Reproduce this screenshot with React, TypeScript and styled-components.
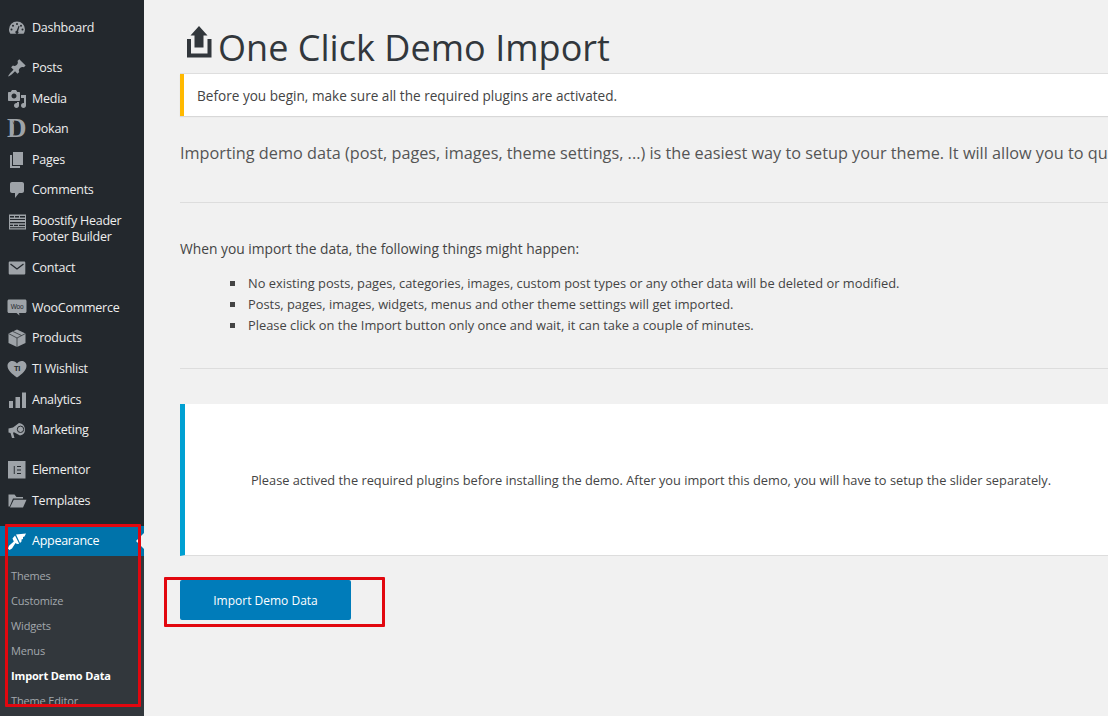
import React from "react";
import styled, { createGlobalStyle } from "styled-components";

const Global = createGlobalStyle`
  html, body { margin: 0; padding: 0; height: 100%; overflow: hidden; background: #f1f1f1; }
  body { font-family: "Open Sans", "Noto Sans", sans-serif; }
  #root { height: 100%; }
`;

const Page = styled.div`
  display: flex; width: 1108px; height: 716px; overflow: hidden; position: relative; background: #f1f1f1;
`;
const Sidebar = styled.nav`
  width: 144px; flex: none; background: #23282d; padding-top: 12.6px; box-sizing: border-box; overflow: hidden;
`;
const Group = styled.div`
  margin-bottom: 9.6px;
`;
const Row = styled.div<{ $tall?: boolean; $active?: boolean }>`
  display: flex; align-items: ${p => (p.$tall ? "flex-start" : "center")};
  height: ${p => (p.$tall ? "46.6px" : p.$active ? "30px" : "30.6px")};
  padding-top: ${p => (p.$tall ? "7px" : "0")};
  box-sizing: border-box;
  position: relative;
  background: ${p => (p.$active ? "#0073aa" : "transparent")};
  color: ${p => (p.$active ? "#fff" : "#eee")};
  font-size: 12.5px; line-height: 16px; letter-spacing: -0.26px;
  svg { fill: ${p => (p.$active ? "#fff" : "#9ea3a8")}; }
`;
const IconSlot = styled.span`
  width: 32px; flex: none; display: flex; justify-content: center; padding-left: 1px; box-sizing: border-box;
  svg { width: 20px; height: 20px; display: block; overflow: visible; }
`;
const Label = styled.span`
  white-space: pre-line;
`;
const Notch = styled.span`
  position: absolute; right: 0; top: 7px; width: 0; height: 0;
  border: 8px solid transparent; border-right-color: #f1f1f1; border-left-width: 0;
`;
const SubMenu = styled.div`
  background: #32373c; padding-top: 7px; height: 200px;
`;
const SubItem = styled.div<{ $current?: boolean }>`
  height: 25px; line-height: 25px; padding-left: 11px;
  font-size: 11px; letter-spacing: -0.15px;
  color: ${p => (p.$current ? "#fff" : "#a3a8ad")};
  font-weight: ${p => (p.$current ? 700 : 400)};
`;
const Main = styled.main`
  flex: none; width: 942px; margin-left: 36px; color: #444;
`;
const Title = styled.h1`
  display: flex; align-items: flex-start; margin: 0; height: 74px; color: #32373c;
  font-size: 36px; font-weight: 400; line-height: 50px; padding-top: 23px; box-sizing: border-box; white-space: nowrap;
  letter-spacing: 0.03px;
  svg { width: 27px; height: 32px; margin: 3px 5px 0 6px; fill: #32373c; flex: none; }
`;
const Notice = styled.div`
  height: 42px; background: #fff; border-left: 4px solid #ffb900;
  box-shadow: 0 1px 1px rgba(0,0,0,.1), 0 -1px 0 rgba(0,0,0,.08);
  display: flex; align-items: center; padding-left: 13px; font-size: 13.6px; white-space: nowrap; color: #444;
  width: 1000px; box-sizing: border-box;
`;
const Intro = styled.p`
  margin: 25px 0 0; height: 25px; font-size: 16.25px; line-height: 25px; color: #555; white-space: nowrap;
`;
const Rule = styled.hr<{ $gap: number }>`
  margin: ${p => p.$gap}px 0 0; border: 0; border-top: 1px solid #ddd; width: 1000px;
`;
const Lead = styled.p`
  margin: 36px 0 0; font-size: 13.8px; line-height: 20px; color: #444; white-space: nowrap;
`;
const List = styled.ul`
  margin: 14px 0 0; padding: 0 0 0 68px; list-style: none; font-size: 12.85px; line-height: 21px; color: #444;
`;
const ListItem = styled.li`
  position: relative; white-space: nowrap;
  &::before { content: ""; position: absolute; left: -18px; top: 8px; width: 5px; height: 5px; background: #444; }
`;
const InfoBox = styled.div`
  margin-top: 35px; height: 152px; background: #fff; border-left: 5px solid #00a0d2;
  border-bottom: 1px solid #ddd; box-sizing: border-box; padding-right: 5px;
  display: flex; align-items: center; justify-content: center; font-size: 12.8px; color: #444; white-space: nowrap;
`;
const ImportButton = styled.button`
  display: block; margin-top: 24px; width: 171px; height: 40px; border: 0; border-radius: 2px; background: #007cba;
  color: #fff; font-family: inherit; font-size: 12px; padding: 0;
`;
const Callout = styled.div<{ $x: number; $y: number; $w: number; $h: number }>`
  position: absolute; left: ${p => p.$x}px; top: ${p => p.$y}px; width: ${p => p.$w}px; height: ${p => p.$h}px;
  border: 3px solid #e2070f; border-radius: 1px; box-sizing: border-box; pointer-events: none;
`;

const P = ({ d }: { d: string }) => <path d={d} fillRule="evenodd" />;
const Dark = "#23282d";
const V = (c: React.ReactNode) => <svg viewBox="0 0 20 20">{c}</svg>;

const icons: Record<string, React.ReactNode> = {
  dashboard: V(<><path d="M10 3.5a8 8 0 0 0-8 8c0 1.7.5 3 1.4 4.2h13.2A7.8 7.8 0 0 0 18 11.5a8 8 0 0 0-8-8z" /><g fill={Dark}><circle cx="10" cy="6" r="1" /><circle cx="6" cy="7.7" r="1" /><circle cx="14" cy="7.7" r="1" /><circle cx="4.5" cy="11.5" r="1" /><circle cx="15.5" cy="11.5" r="1" /><path d="M11.6 7.8l.9.4-1.4 5a1.6 1.6 0 1 1-1.5-.5z" /></g></>),
  posts: V(<P d="M10.44 3.02l1.82-1.82 6.36 6.35-1.83 1.82c-1.05-.68-2.48-.57-3.41.36l-.75.75c-.92.93-1.04 2.35-.35 3.41l-1.83 1.82-2.41-2.41-2.8 2.79c-.42.42-3.38 2.71-3.8 2.29s1.86-3.39 2.28-3.81l2.79-2.79L4.1 9.36l1.83-1.82c1.05.69 2.48.57 3.4-.36l.75-.75c.93-.92 1.05-2.35.36-3.41z" />),
  media: V(<P d="M13 11V4c0-.55-.45-1-1-1h-1.67L9 1H5L3.67 3H2c-.55 0-1 .45-1 1v7c0 .55.45 1 1 1h10c.55 0 1-.45 1-1zM7 4.5c1.38 0 2.5 1.12 2.5 2.5S8.38 9.5 7 9.5 4.5 8.38 4.5 7 5.62 4.5 7 4.5zM14 6h5v10.5c0 1.38-1.12 2.5-2.5 2.5S14 17.88 14 16.5s1.12-2.5 2.5-2.5c.17 0 .34.02.5.05V9h-3V6zm-4 8.05V13h2v3.5c0 1.38-1.12 2.5-2.5 2.5S7 17.88 7 16.5 8.12 14 9.5 14c.17 0 .34.02.5.05z" />),
  dokan: <svg viewBox="0 0 20 20"><text x="9.5" y="18" textAnchor="middle" fontFamily="'Liberation Serif', serif" fontWeight="700" fontSize="27">D</text><path d="M5 2C8 5.500 8.700 12 6 17 10 13.500 10 6 5 2z" fill={Dark} /></svg>,
  pages: V(<P d="M6 15V2h10v13H6zm-1 1h8v2H3V5h2v11z" />),
  comments: V(<P d="M5 2h10c1.1 0 2 .9 2 2v7c0 1.1-.9 2-2 2h-3l-4 5v-5H5c-1.1 0-2-.9-2-2V4c0-1.1.9-2 2-2z" />),
  boostify: V(<P d="M2 1.500h17v15H2zM3 3v1.600h4V3zm5 0v1.600h4V3zm5 0v1.600h5V3zM3 6v1h15V6zm0 3v1.300h15V9zm0 2.800v1.200h3v-1.200zm4 0v1.200h4v-1.200zm5 0v1.200h6v-1.200zM3 14.200v1h15v-1z" />),
  contact: V(<><path d="M3 3.500h14c.8 0 1.300.5 1.300 1.300v10.400c0 .8-.5 1.300-1.300 1.300H3c-.8 0-1.300-.5-1.300-1.300V4.800c0-.8.5-1.300 1.300-1.300z" /><path d="M3.500 6l6.500 5 6.500-5" fill="none" stroke={Dark} strokeWidth="1.300" /></>),
  woo: <svg viewBox="0 0 20 20"><path d="M2 1.500h16c.8 0 1.500.7 1.500 1.500v10.500c0 .8-.7 1.500-1.500 1.500h-6l.5 2.500-3-2.500H2c-.8 0-1.500-.7-1.500-1.500V3c0-.8.7-1.500 1.500-1.500z" /><text x="10" y="11" textAnchor="middle" fontFamily="'Liberation Sans', sans-serif" fontSize="6.500" fill={Dark}>Woo</text></svg>,
  products: V(<><path d="M10 1.500l8.500 4v9.500L10 19l-8.500-4V5.500z" /><path d="M1.500 5.500L10 10l8.500-4.500M10 10v9M6 3.500l8.500 4" fill="none" stroke={Dark} strokeWidth=".7" /></>),
  wishlist: <svg viewBox="0 0 20 20"><path d="M10 18.500C5 15 .5 11.500.5 6.800.5 3.700 3 2 5.300 2 7.300 2 9 3 10 4.500 11 3 12.700 2 14.700 2c2.300 0 4.800 1.700 4.800 4.800 0 4.700-4.500 8.200-9.500 11.700z" /><text x="10" y="11.500" textAnchor="middle" fontFamily="'Liberation Sans', sans-serif" fontWeight="700" fontSize="7.500" fill={Dark}>TI</text></svg>,
  analytics: V(<P d="M2 11h4v7H2zM8.500 7h4.500v11H8.500zM15 2.500h4V18h-4z" />),
  marketing: V(<><path d="M1.500 8.500l4.500-1 6-4.500a7 7 0 0 1 6 6.500 6 6 0 0 1-5 6l-6-3.200-1 .4 1.500 5.300H5l-1.500-5-2-.5z" /><circle cx="13.500" cy="9.300" r="3.200" fill="none" stroke={Dark} strokeWidth="1" /></>),
  elementor: <svg viewBox="0 0 20 20"><path d="M1 1h17.500v17.500H1z" /><path d="M6.800 6h.9v8h-.9zM10 6h4v1h-4zM10 9.500h4v1h-4zM10 13h4v1h-4z" fill={Dark} /></svg>,
  templates: V(<P d="M1.500 3.500h6l2 2.500h6.500v1.600H6L2.700 15.500h-1.200zM6.800 8.800H19.500l-3.500 7.700H3z" />),
  appearance: V(<P d="M9 3.500L19 2.500l-1.500 3-1.500.5v2l-1.500.5v2L13 12zM8 4.500l4.200 8.300-2.200.2-1.500-1L5 17.500 2.500 19 1 17.500l1-2.700 4.800-4.300-1.300-3z" />),
};

const groups: { id: string; label: string; tall?: boolean }[][] = [
  [{ id: "dashboard", label: "Dashboard" }],
  [
    { id: "posts", label: "Posts" },
    { id: "media", label: "Media" },
    { id: "dokan", label: "Dokan" },
    { id: "pages", label: "Pages" },
    { id: "comments", label: "Comments" },
    { id: "boostify", label: "Boostify Header\nFooter Builder", tall: true },
    { id: "contact", label: "Contact" },
  ],
  [
    { id: "woo", label: "WooCommerce" },
    { id: "products", label: "Products" },
    { id: "wishlist", label: "TI Wishlist" },
    { id: "analytics", label: "Analytics" },
    { id: "marketing", label: "Marketing" },
  ],
  [
    { id: "elementor", label: "Elementor" },
    { id: "templates", label: "Templates" },
  ],
];

const subItems = ["Themes", "Customize", "Widgets", "Menus", "Import Demo Data", "Theme Editor"];

export default function App() {
  return (
    <Page>
      <Global />
      <Sidebar>
        {groups.map((g, i) => (
          <Group key={i}>
            {g.map(it => (
              <Row key={it.id} $tall={it.tall}>
                <IconSlot>{icons[it.id]}</IconSlot>
                <Label>{it.label}</Label>
              </Row>
            ))}
          </Group>
        ))}
        <Row $active>
          <IconSlot>{icons.appearance}</IconSlot>
          <Label>Appearance</Label>
          <Notch />
        </Row>
        <SubMenu>
          {subItems.map(s => (
            <SubItem key={s} $current={s === "Import Demo Data"}>{s}</SubItem>
          ))}
        </SubMenu>
      </Sidebar>
      <Main>
        <Title>
          <svg viewBox="0 0 27 32">
            <path d="M13 0l8.500 9.500H17.500V21.500h-9V9.500H4.500zM1 13h4v14.500h16.500V13h4v18.500H1z" />
          </svg>
          One Click Demo Import
        </Title>
        <Notice>Before you begin, make sure all the required plugins are activated.</Notice>
        <Intro>Importing demo data (post, pages, images, theme settings, ...) is the easiest way to setup your theme. It will allow you to quickly edit everything instead of creating content from scratch.</Intro>
        <Rule $gap={36} />
        <Lead>When you import the data, the following things might happen:</Lead>
        <List>
          <ListItem>No existing posts, pages, categories, images, custom post types or any other data will be deleted or modified.</ListItem>
          <ListItem>Posts, pages, images, widgets, menus and other theme settings will get imported.</ListItem>
          <ListItem>Please click on the Import button only once and wait, it can take a couple of minutes.</ListItem>
        </List>
        <Rule $gap={32} />
        <InfoBox>Please actived the required plugins before installing the demo. After you import this demo, you will have to setup the slider separately.</InfoBox>
        <ImportButton>Import Demo Data</ImportButton>
      </Main>
      <Callout $x={5} $y={524} $w={136} $h={183} />
      <Callout $x={164} $y={577} $w={221} $h={50} />
    </Page>
  );
}
